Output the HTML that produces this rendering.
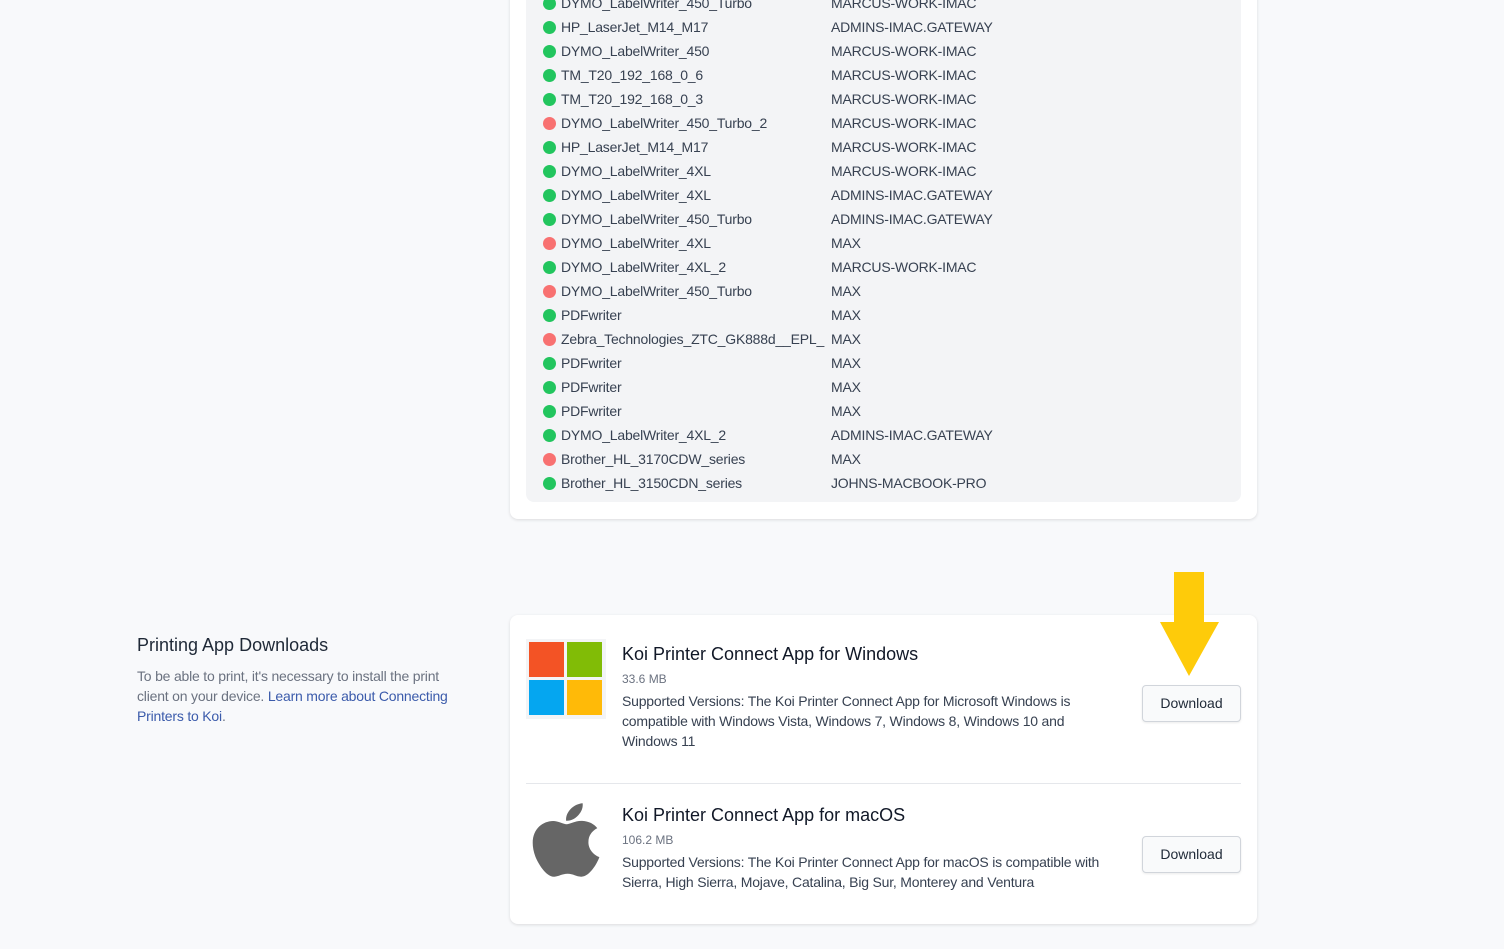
<!DOCTYPE html>
<html><head><meta charset="utf-8"><style>
*{margin:0;padding:0;box-sizing:border-box}
body{width:1504px;height:949px;background:#f8f9fb;font-family:"Liberation Sans",sans-serif;position:relative;overflow:hidden;color:#1f2937}
.card{position:absolute;left:510px;width:747px;background:#fff;border-radius:8px;box-shadow:0 1px 3px rgba(0,0,0,.12)}
.panel{position:absolute;left:16px;width:715px;background:#f3f4f6;border-radius:8px}
.row{position:absolute;left:17px;height:24px;line-height:24px;font-size:14px;letter-spacing:-.2px;color:#374151;white-space:nowrap}
.dot{position:absolute;left:0;top:6px;width:13px;height:13px;border-radius:50%}
.g{background:#22c55e}.r{background:#f87171}
.n{position:absolute;left:18px}.h{position:absolute;left:288px}
.t{position:absolute;left:112px;font-size:18px;color:#111827;white-space:nowrap}
.s{position:absolute;left:112px;font-size:12px;color:#6b7280}
.d{position:absolute;left:112px;font-size:14px;line-height:20px;color:#374151;width:475px;letter-spacing:-.2px}
.btn{position:absolute;left:632px;width:99px;height:37px;border:1px solid #d1d5db;border-radius:4px;background:#f9fafb;font-size:14px;color:#1f2937;text-align:center;line-height:35px;box-shadow:0 1px 2px rgba(0,0,0,.08)}
</style></head><body>
<div class="card" style="top:-20px;height:539px">
<div class="panel" style="top:0;height:522px">
<div class="row" style="top:11px"><span class="dot g"></span><span class="n">DYMO_LabelWriter_450_Turbo</span><span class="h">MARCUS-WORK-IMAC</span></div>
<div class="row" style="top:35px"><span class="dot g"></span><span class="n">HP_LaserJet_M14_M17</span><span class="h">ADMINS-IMAC.GATEWAY</span></div>
<div class="row" style="top:59px"><span class="dot g"></span><span class="n">DYMO_LabelWriter_450</span><span class="h">MARCUS-WORK-IMAC</span></div>
<div class="row" style="top:83px"><span class="dot g"></span><span class="n">TM_T20_192_168_0_6</span><span class="h">MARCUS-WORK-IMAC</span></div>
<div class="row" style="top:107px"><span class="dot g"></span><span class="n">TM_T20_192_168_0_3</span><span class="h">MARCUS-WORK-IMAC</span></div>
<div class="row" style="top:131px"><span class="dot r"></span><span class="n">DYMO_LabelWriter_450_Turbo_2</span><span class="h">MARCUS-WORK-IMAC</span></div>
<div class="row" style="top:155px"><span class="dot g"></span><span class="n">HP_LaserJet_M14_M17</span><span class="h">MARCUS-WORK-IMAC</span></div>
<div class="row" style="top:179px"><span class="dot g"></span><span class="n">DYMO_LabelWriter_4XL</span><span class="h">MARCUS-WORK-IMAC</span></div>
<div class="row" style="top:203px"><span class="dot g"></span><span class="n">DYMO_LabelWriter_4XL</span><span class="h">ADMINS-IMAC.GATEWAY</span></div>
<div class="row" style="top:227px"><span class="dot g"></span><span class="n">DYMO_LabelWriter_450_Turbo</span><span class="h">ADMINS-IMAC.GATEWAY</span></div>
<div class="row" style="top:251px"><span class="dot r"></span><span class="n">DYMO_LabelWriter_4XL</span><span class="h">MAX</span></div>
<div class="row" style="top:275px"><span class="dot g"></span><span class="n">DYMO_LabelWriter_4XL_2</span><span class="h">MARCUS-WORK-IMAC</span></div>
<div class="row" style="top:299px"><span class="dot r"></span><span class="n">DYMO_LabelWriter_450_Turbo</span><span class="h">MAX</span></div>
<div class="row" style="top:323px"><span class="dot g"></span><span class="n">PDFwriter</span><span class="h">MAX</span></div>
<div class="row" style="top:347px"><span class="dot r"></span><span class="n">Zebra_Technologies_ZTC_GK888d__EPL_</span><span class="h">MAX</span></div>
<div class="row" style="top:371px"><span class="dot g"></span><span class="n">PDFwriter</span><span class="h">MAX</span></div>
<div class="row" style="top:395px"><span class="dot g"></span><span class="n">PDFwriter</span><span class="h">MAX</span></div>
<div class="row" style="top:419px"><span class="dot g"></span><span class="n">PDFwriter</span><span class="h">MAX</span></div>
<div class="row" style="top:443px"><span class="dot g"></span><span class="n">DYMO_LabelWriter_4XL_2</span><span class="h">ADMINS-IMAC.GATEWAY</span></div>
<div class="row" style="top:467px"><span class="dot r"></span><span class="n">Brother_HL_3170CDW_series</span><span class="h">MAX</span></div>
<div class="row" style="top:491px"><span class="dot g"></span><span class="n">Brother_HL_3150CDN_series</span><span class="h">JOHNS-MACBOOK-PRO</span></div>
</div></div>

<div style="position:absolute;left:137px;top:635px;font-size:18px;color:#1f2937">Printing App Downloads</div>
<div style="position:absolute;left:137px;top:666px;width:330px;font-size:14px;line-height:20px;color:#6b7280;letter-spacing:-.2px">To be able to print, it's necessary to install the print client on your device. <span style="color:#3b5bab">Learn more about Connecting Printers to Koi</span>.</div>

<div class="card" style="top:615px;height:309px">
<div style="position:absolute;left:16px;top:24px;width:80px;height:80px;background:#f3f4f6">
<div style="position:absolute;left:3px;top:3px;width:35px;height:35px;background:#f35325"></div>
<div style="position:absolute;left:41px;top:3px;width:35px;height:35px;background:#81bc06"></div>
<div style="position:absolute;left:3px;top:41px;width:35px;height:35px;background:#05a6f0"></div>
<div style="position:absolute;left:41px;top:41px;width:35px;height:35px;background:#ffba08"></div>
</div>
<div class="t" style="top:29px">Koi Printer Connect App for Windows</div>
<div class="s" style="top:57px">33.6 MB</div>
<div class="d" style="top:76px">Supported Versions: The Koi Printer Connect App for Microsoft Windows is compatible with Windows Vista, Windows 7, Windows 8, Windows 10 and Windows 11</div>
<div class="btn" style="top:70px">Download</div>
<div style="position:absolute;left:16px;top:168px;width:715px;height:1px;background:#e5e7eb"></div>
<svg style="position:absolute;left:22px;top:183px" width="68" height="84" viewBox="0 0 384 512" preserveAspectRatio="none"><path fill="#666" d="M318.7 268.7c-.2-36.7 16.4-64.4 50-84.8-18.8-26.9-47.2-41.7-84.7-44.6-35.5-2.8-74.3 20.7-88.5 20.7-15 0-49.4-19.7-76.4-19.7C63.3 141.2 4 184.8 4 273.5q0 39.3 14.4 81.2c12.8 36.7 59 126.7 107.2 125.2 25.2-.6 43-17.9 75.8-17.9 31.8 0 48.3 17.9 76.4 17.9 48.6-.7 90.4-82.5 102.6-119.3-65.2-30.7-61.7-90-61.7-91.9zm-56.6-164.2c27.3-32.4 24.8-61.9 24-72.5-24.1 1.4-52 16.4-67.9 34.9-17.5 19.8-27.8 44.3-25.6 71.9 26.1 2 49.9-11.4 69.5-34.3z"/></svg>
<div class="t" style="top:190px">Koi Printer Connect App for macOS</div>
<div class="s" style="top:218px">106.2 MB</div>
<div class="d" style="top:237px;width:500px">Supported Versions: The Koi Printer Connect App for macOS is compatible with Sierra, High Sierra, Mojave, Catalina, Big Sur, Monterey and Ventura</div>
<div class="btn" style="top:221px">Download</div>
</div>

<svg style="position:absolute;left:1158px;top:572px" width="64" height="106"><path fill="#fecb0a" d="M16 0h30v50h15L31 104 2 50h14z"/></svg>
</body></html>
